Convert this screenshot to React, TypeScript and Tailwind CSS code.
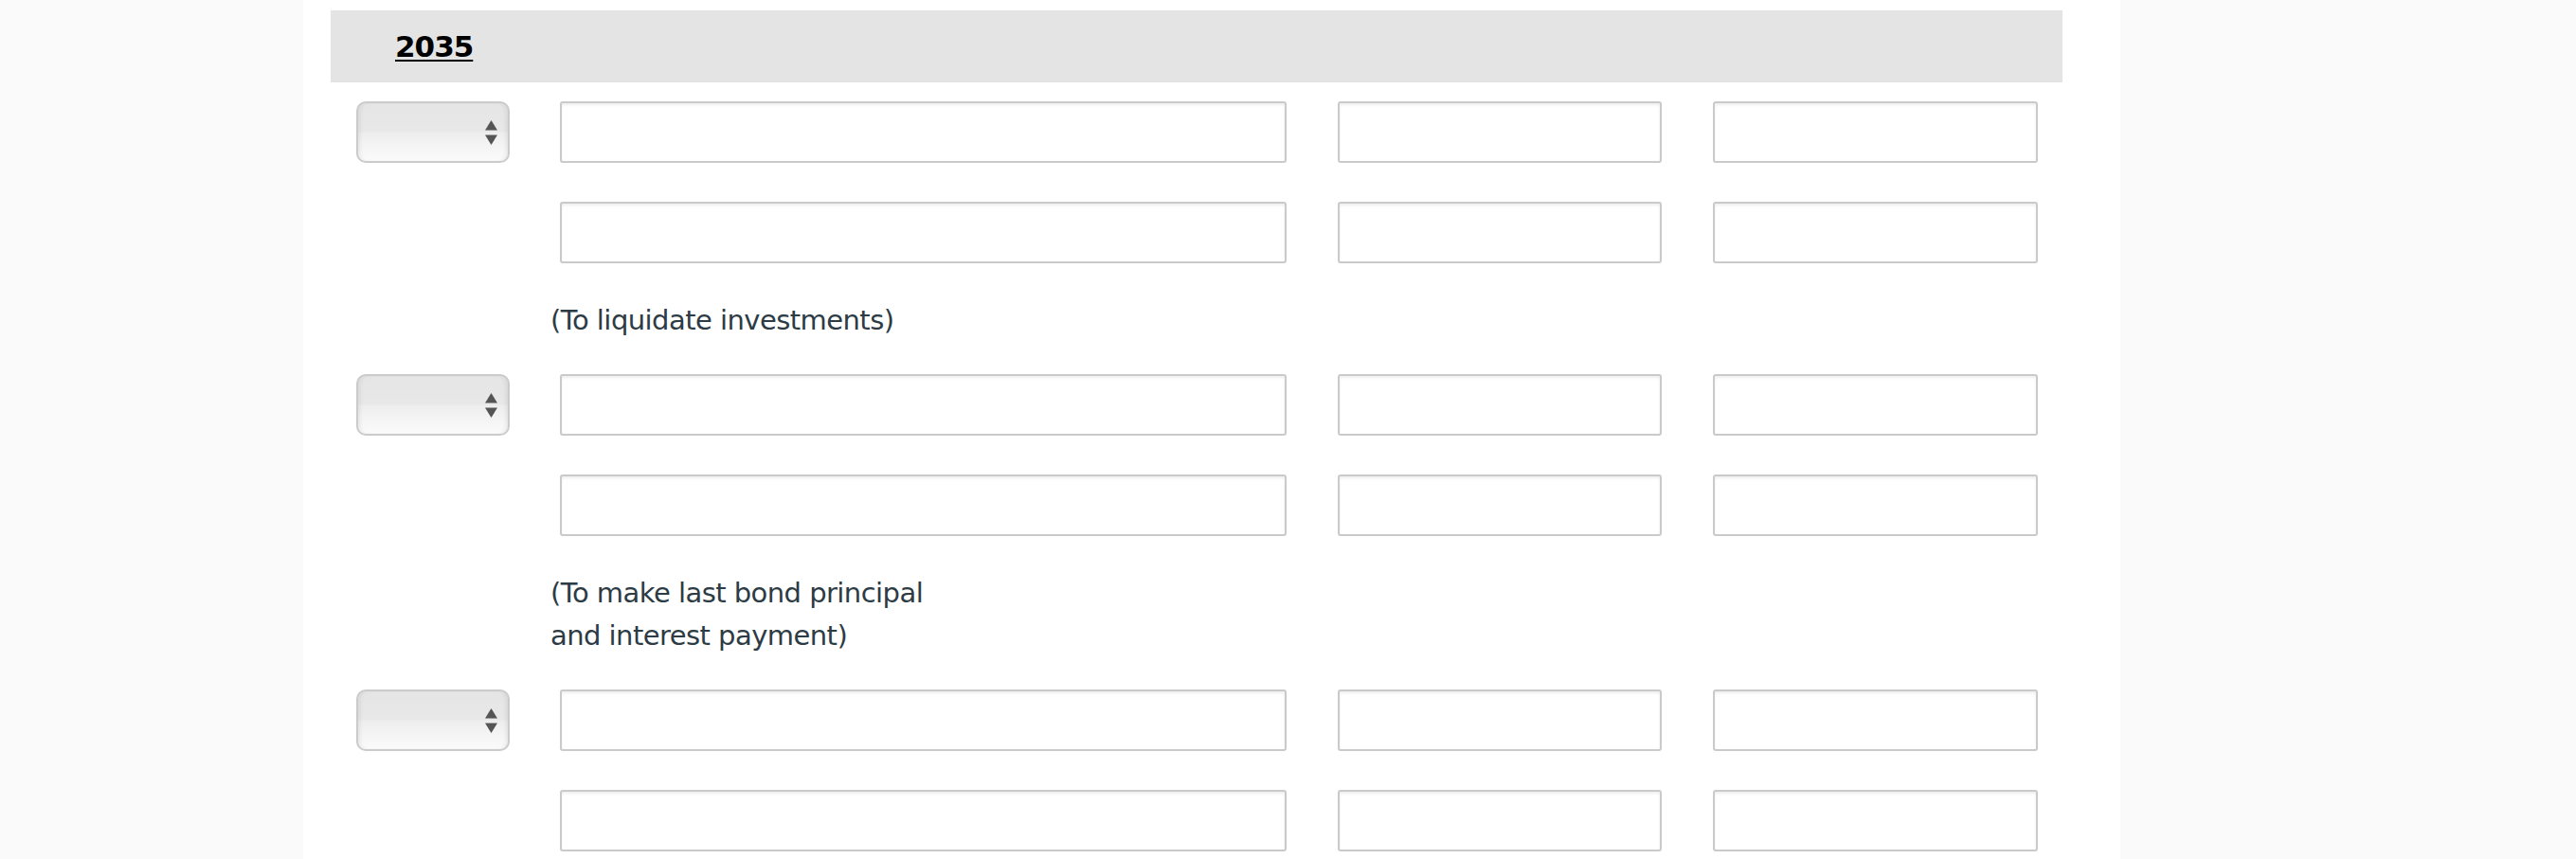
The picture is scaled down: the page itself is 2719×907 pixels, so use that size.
import React from "react";

type Row =
  | { kind: "entry"; select: boolean }
  | { kind: "note"; text: string };

const rows: Row[] = [
  { kind: "entry", select: true },
  { kind: "entry", select: false },
  { kind: "note", text: "(To liquidate investments)" },
  { kind: "entry", select: true },
  { kind: "entry", select: false },
  { kind: "note", text: "(To make last bond principal and interest payment)" },
  { kind: "entry", select: true },
  { kind: "entry", select: false },
];

function SelectBox() {
  return (
    <div className="relative h-[65px] w-[162px] shrink-0 rounded-[10px] border-2 border-[#cbcbcb] bg-[linear-gradient(to_bottom,#e5e5e5_0%,#e8e8e8_48%,#eeeeee_52%,#fbfbfb_100%)] shadow-[inset_4px_0_4px_-2px_rgba(0,0,0,0.07),inset_-4px_0_4px_-2px_rgba(0,0,0,0.07)]">
      <svg
        className="absolute right-[11px] top-1/2 -translate-y-1/2"
        width="13"
        height="26"
        viewBox="0 0 13 26"
      >
        <polygon points="6.5,0 13,10.5 0,10.5" fill="#555" />
        <polygon points="0,15.5 13,15.5 6.5,26" fill="#555" />
      </svg>
    </div>
  );
}

function TextBox({ w }: { w: string }) {
  return (
    <div
      className={`h-[65px] ${w} shrink-0 rounded-[3px] border-2 border-[#cacaca] bg-white shadow-[inset_0_2px_3px_rgba(0,0,0,0.07)]`}
    />
  );
}

function EntryRow({ select }: { select: boolean }) {
  return (
    <div className="flex items-center">
      <div className="w-[162px] shrink-0">{select && <SelectBox />}</div>
      <div className="ml-[53px]">
        <TextBox w="w-[767px]" />
      </div>
      <div className="ml-[54px]">
        <TextBox w="w-[342px]" />
      </div>
      <div className="ml-[54px]">
        <TextBox w="w-[343px]" />
      </div>
    </div>
  );
}

export default function App() {
  return (
    <div className="h-[907px] w-[2719px] overflow-hidden bg-[#fafafa] font-['DejaVu_Sans',Verdana,sans-serif]">
      <div className="ml-[320px] h-full w-[1918px] bg-white pl-[29px] pt-[11px]">
        <div className="flex h-[76px] w-[1828px] items-center bg-[#e4e4e4] pl-[68px]">
          <span className="text-[31px] font-bold leading-none tracking-[-1px] text-black underline decoration-2 underline-offset-[3px]">
            2035
          </span>
        </div>

        <div className="pl-[27px] pt-[20px]">
          {rows.map((r, i) =>
            r.kind === "entry" ? (
              <div key={i} className={i === 0 ? "" : "mt-[41px]"}>
                <EntryRow select={r.select} />
              </div>
            ) : (
              <div
                key={i}
                className="mb-[-7px] ml-[205px] mt-[38px] w-[440px] text-[29px] leading-[45px] tracking-[-0.55px] text-[#2d3b45]"
              >
                {r.text}
              </div>
            )
          )}
        </div>
      </div>
    </div>
  );
}
